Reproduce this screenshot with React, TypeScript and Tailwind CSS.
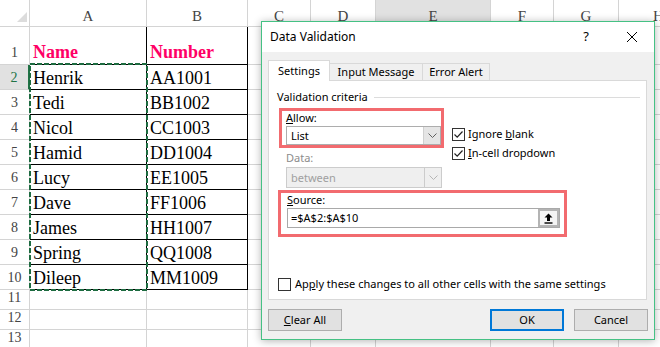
import React from "react";

const names = ["Henrik", "Tedi", "Nicol", "Hamid", "Lucy", "Dave", "James", "Spring", "Dileep"];
const codes = ["AA1001", "BB1002", "CC1003", "DD1004", "EE1005", "FF1006", "HH1007", "QQ1008", "MM1009"];
const letters = ["A", "B", "C", "D", "E", "F", "G", "H"];

const Check = () => (
  <div className="w-[13px] h-[13px] border border-[#333] bg-white flex items-center justify-center">
    <svg width="11" height="11" viewBox="0 0 11 11">
      <path d="M1.5 5.5 L4.2 8.2 L9.5 2.5" fill="none" stroke="#222" strokeWidth="1.2" />
    </svg>
  </div>
);

const Chevron = ({ color }: { color: string }) => (
  <svg width="9" height="5" viewBox="0 0 9 5">
    <path d="M0.5 0.5 L4.5 4.5 L8.5 0.5" fill="none" stroke={color} strokeWidth="1" />
  </svg>
);

function Sheet() {
  const cells: React.ReactNode[] = [];

  // column header row
  cells.push(
    <div key="corner" className="border-r border-b border-[#d4d4d4] flex items-end justify-end pr-[2px] pb-[4px]">
      <svg width="10" height="10" viewBox="0 0 10 10">
        <polygon points="10,0 10,10 0,10" fill="#dcdcdc" />
      </svg>
    </div>
  );
  letters.forEach((l) => {
    cells.push(
      <div
        key={"h" + l}
        className={
          l === "E"
            ? "border-r border-b border-[#d4d4d4] bg-[#e1e1e1] flex items-end justify-center pb-[2px] text-[15px] leading-none text-[#444]"
            : "border-r border-b border-[#d4d4d4] bg-white flex items-end justify-center pb-[2px] text-[15px] leading-none text-[#444]"
        }
      >
        {l}
      </div>
    );
  });

  for (let r = 1; r <= 13; r++) {
    cells.push(
      <div
        key={"r" + r}
        className={
          r === 2
            ? "border-r-2 border-b border-r-[#217346] border-b-[#d4d4d4] bg-[#e1e1e1] flex items-end justify-center pb-[4px] text-[14px] leading-none text-[#217346]"
            : "border-r border-b border-[#d4d4d4] flex items-end justify-center pb-[4px] text-[14px] leading-none text-[#444]"
        }
      >
        {r}
      </div>
    );
    letters.forEach((l, ci) => {
      const inTable = r <= 10 && ci < 2;
      let text = "";
      if (r === 1 && ci === 0) text = "Name";
      if (r === 1 && ci === 1) text = "Number";
      if (r > 1 && r <= 10 && ci === 0) text = names[r - 2];
      if (r > 1 && r <= 10 && ci === 1) text = codes[r - 2];
      cells.push(
        <div
          key={l + r}
          className={
            inTable
              ? r === 1
                ? "border-r border-b border-black flex items-end pl-[3px] pb-[2px] text-[18px] leading-[20px] font-bold text-[#ff0066]"
                : "border-r border-b border-black flex items-end pl-[3px] pb-[1px] text-[18px] leading-[20px] text-black"
              : "border-r border-b border-[#d4d4d4]"
          }
        >
          {text}
        </div>
      );
    });
  }

  return (
    <div className="relative grid grid-cols-[30px_117px_101px_63px_65px_115px_63px_65px_80px] grid-rows-[27px_38px_repeat(9,25px)_repeat(3,20px)] font-['Liberation_Serif',serif]">
      {cells}
      {/* copy marquee around A2:A10 */}
      <svg className="absolute left-[29px] top-[63px]" width="119" height="228" viewBox="0 0 119 228">
        <rect x="1" y="1" width="117" height="226" fill="none" stroke="#1d6b40" strokeWidth="2" strokeDasharray="5 2" />
      </svg>
    </div>
  );
}

function Dialog() {
  return (
    <div className="absolute left-[261px] top-[21px] w-[394px] h-[319px] border border-[#45c184] bg-[#f0f0f0] shadow-[0_1px_8px_rgba(0,0,0,0.3)] flex flex-col font-['Noto_Sans',sans-serif] text-[11px] text-black">
      {/* title bar */}
      <div className="h-[30px] bg-white flex items-center pl-[8px] pr-[17px]">
        <span className="text-[12px]">Data Validation</span>
        <span className="ml-auto text-[13px]">?</span>
        <svg className="ml-[38px]" width="10" height="10" viewBox="0 0 10 10">
          <path d="M0 0 L10 10 M10 0 L0 10" stroke="#000" strokeWidth="1" />
        </svg>
      </div>

      <div className="flex-1 flex flex-col px-[6px] pt-[8px]">
        {/* tabs */}
        <div className="relative z-10 flex items-end h-[21px]">
          <div className="h-[21px] w-[62px] bg-white border border-b-0 border-[#d9d9d9] flex items-center justify-center">
            Settings
          </div>
          <div className="h-[18px] w-[93px] border border-l-0 border-b-0 border-[#d9d9d9] flex items-center justify-center">
            Input Message
          </div>
          <div className="h-[18px] w-[67px] border border-l-0 border-b-0 border-[#d9d9d9] flex items-center justify-center">
            Error Alert
          </div>
        </div>

        {/* panel */}
        <div className="mt-[-1px] h-[220px] w-[379px] bg-white border border-[#d9d9d9] flex flex-col pl-[8px]">
          <div className="mt-[9px] h-[14px] flex items-center pr-[6px]">
            <span className="leading-[14px]">Validation criteria</span>
            <div className="flex-1 h-px bg-[#dcdcdc] ml-[6px]" />
          </div>

          <div className="mt-[4px] flex items-start">
            <div className="ml-[2px] w-[165px] h-[40px] border-[3px] border-[#f26b6f] pl-[4px] flex flex-col">
              <div className="h-[14px] leading-[14px]">
                <u>A</u>llow:
              </div>
              <div className="mt-[1px] h-[19px] w-[155px] border border-[#adadad] bg-white flex">
                <span className="flex-1 pl-[4px] leading-[17px]">List</span>
                <div className="w-[17px] bg-[#e5e5e5] border-l border-[#d0d0d0] flex items-center justify-center">
                  <Chevron color="#606060" />
                </div>
              </div>
            </div>
            <div className="ml-[8px] mt-[20px] mb-[-12px] flex flex-col gap-[6px]">
              <div className="h-[13px] flex items-center gap-[3px]">
                <Check />
                <span>
                  Ignore <u>b</u>lank
                </span>
              </div>
              <div className="h-[13px] flex items-center gap-[3px]">
                <Check />
                <span>
                  <u>I</u>n-cell dropdown
                </span>
              </div>
            </div>
          </div>

          <div className="mt-[3px] ml-[9px] h-[14px] leading-[14px] text-[#8c8c8c]">Data:</div>
          <div className="mt-[2px] ml-[9px] w-[156px] h-[21px] border border-[#cccccc] bg-[#efefef] flex">
            <span className="flex-1 pl-[4px] leading-[19px] text-[#a0a0a0]">between</span>
            <div className="w-[17px] border-l border-[#cccccc] flex items-center justify-center">
              <Chevron color="#b5b5b5" />
            </div>
          </div>

          <div className="mt-[2px] ml-[1px] w-[289px] h-[47px] border-[3px] border-[#f26b6f] pl-[6px] flex flex-col">
            <div className="h-[14px] leading-[14px]">
              <u>S</u>ource:
            </div>
            <div className="mt-[1px] h-[20px] w-[273px] border border-[#a9a9a9] bg-white flex">
              <span className="flex-1 pl-[3px] leading-[18px]">=$A$2:$A$10</span>
              <div className="w-[21px] border-2 border-[#b4b4b4] bg-[#f4f4f4] flex items-center justify-center">
                <svg width="9" height="11" viewBox="0 0 9 11">
                  <polygon points="4.5,0.5 0.5,4.5 3,4.5 3,8 6,8 6,4.5 8.5,4.5" fill="#000" />
                  <rect x="0.5" y="9.3" width="8" height="1.4" fill="#000" />
                </svg>
              </div>
            </div>
          </div>

          <div className="mt-auto mb-[8px] ml-[1px] flex items-center">
            <div className="w-[13px] h-[13px] border border-[#333] bg-white" />
            <span className="ml-[4px] leading-[14px]">
              Ap<u>p</u>ly these changes to all other cells with the same settings
            </span>
          </div>
        </div>

        {/* buttons */}
        <div className="mt-[9px] flex">
          <button className="w-[74px] h-[22px] bg-[#e1e1e1] border border-[#adadad] flex items-center justify-center">
            <span>
              <u>C</u>lear All
            </span>
          </button>
          <button className="ml-auto w-[74px] h-[22px] bg-[#e1e1e1] border-2 border-[#0078d7] flex items-center justify-center">
            OK
          </button>
          <button className="ml-[10px] w-[74px] h-[22px] bg-[#e1e1e1] border border-[#adadad] flex items-center justify-center">
            Cancel
          </button>
        </div>
      </div>
    </div>
  );
}

export default function App() {
  return (
    <div className="relative w-[660px] h-[347px] overflow-hidden bg-white">
      <Sheet />
      <Dialog />
    </div>
  );
}
